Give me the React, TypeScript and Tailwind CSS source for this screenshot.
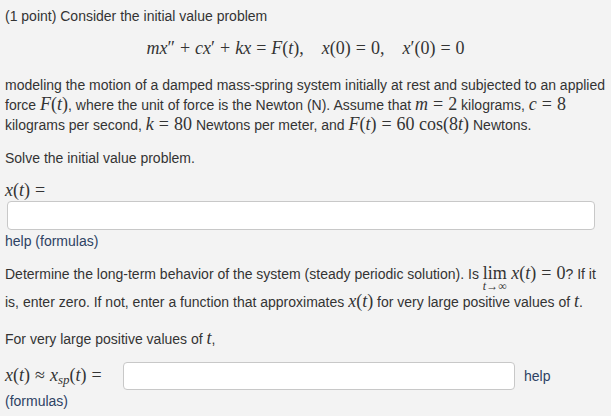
import React from "react";

const I = ({ children }: { children: React.ReactNode }) => (
  <span className="italic">{children}</span>
);

const M = ({ children, className = "" }: { children: React.ReactNode; className?: string }) => (
  <span className={`font-['Liberation_Serif',serif] text-[18px] leading-[1] ${className}`}>{children}</span>
);

const Op = ({ children }: { children: React.ReactNode }) => (
  <span className="mx-[5px]">{children}</span>
);

export default function App() {
  return (
    <div className="w-[611px] h-[416px] overflow-hidden bg-[#f3f3f3] px-[5px] pt-[6px] font-['Liberation_Sans',Arial,sans-serif] text-[14px] leading-[20px] text-[#333]">
      <p className="whitespace-nowrap">(1 point) Consider the initial value problem</p>

      <div className="mt-[11px] h-[24px] leading-[24px] text-center whitespace-nowrap">
        <M>
          <I>mx</I>″<Op>+</Op><I>cx</I>′<Op>+</Op><I>kx</I><Op>=</Op><I>F</I>(<I>t</I>),
          <span className="inline-block w-[18px]" />
          <I>x</I>(0)<Op>=</Op>0,
          <span className="inline-block w-[18px]" />
          <I>x</I>′(0)<Op>=</Op>0
        </M>
      </div>

      <div className="mt-[14px] whitespace-nowrap">
        <div className="h-[20px]">modeling the motion of a damped mass-spring system initially at rest and subjected to an applied</div>
        <div className="h-[20px]">
          force <M><I>F</I>(<I>t</I>)</M>, where the unit of force is the Newton (N). Assume that <M><I>m</I><Op>=</Op>2</M> kilograms, <M><I>c</I><Op>=</Op>8</M>
        </div>
        <div className="h-[20px]">
          kilograms per second, <M><I>k</I><Op>=</Op>80</M> Newtons per meter, and <M><I>F</I>(<I>t</I>)<Op>=</Op>60 cos(8<I>t</I>)</M> Newtons.
        </div>
      </div>

      <p className="mt-[13px] h-[20px]">Solve the initial value problem.</p>

      <div className="mt-[13px] h-[20px]">
        <M><I>x</I>(<I>t</I>)<Op>=</Op></M>
      </div>

      <div className="mt-[0px] ml-[2px] h-[29px] w-[588px] rounded-[4px] border border-[#c8c8c8] bg-white" />

      <div className="mt-[1px] h-[20px] text-[#2d4263]">help (formulas)</div>

      <div className="mt-[13px] h-[20px] whitespace-nowrap">
        Determine the long-term behavior of the system (steady periodic solution). Is{" "}
        <M>
          <span className="relative inline-block leading-[16px]">
            lim
            <span className="absolute left-1/2 top-[17px] -translate-x-1/2 text-[12px] leading-[9px] whitespace-nowrap">
              <I>t</I>→∞
            </span>
          </span>{" "}
          <I>x</I>(<I>t</I>)<Op>=</Op>0
        </M>
        ? If it
      </div>
      <div className="mt-[8px] h-[20px] whitespace-nowrap">
        is, enter zero. If not, enter a function that approximates <M><I>x</I>(<I>t</I>)</M> for very large positive values of <M><I>t</I></M>.
      </div>

      <div className="mt-[17px] h-[20px] whitespace-nowrap">
        For very large positive values of <M><I>t</I></M>,
      </div>

      <div className="mt-[13px] flex h-[28px] items-center">
        <div className="w-[118px] whitespace-nowrap">
          <M>
            <I>x</I>(<I>t</I>)<Op>≈</Op><I>x</I>
            <sub className="text-[13px] italic">sp</sub>(<I>t</I>)<Op>=</Op>
          </M>
        </div>
        <div className="h-[28px] w-[392px] rounded-[4px] border border-[#c8c8c8] bg-white" />
        <span className="ml-[9px] text-[#2d4263]">help</span>
      </div>

      <div className="mt-[1px] text-[#2d4263]">(formulas)</div>
    </div>
  );
}
